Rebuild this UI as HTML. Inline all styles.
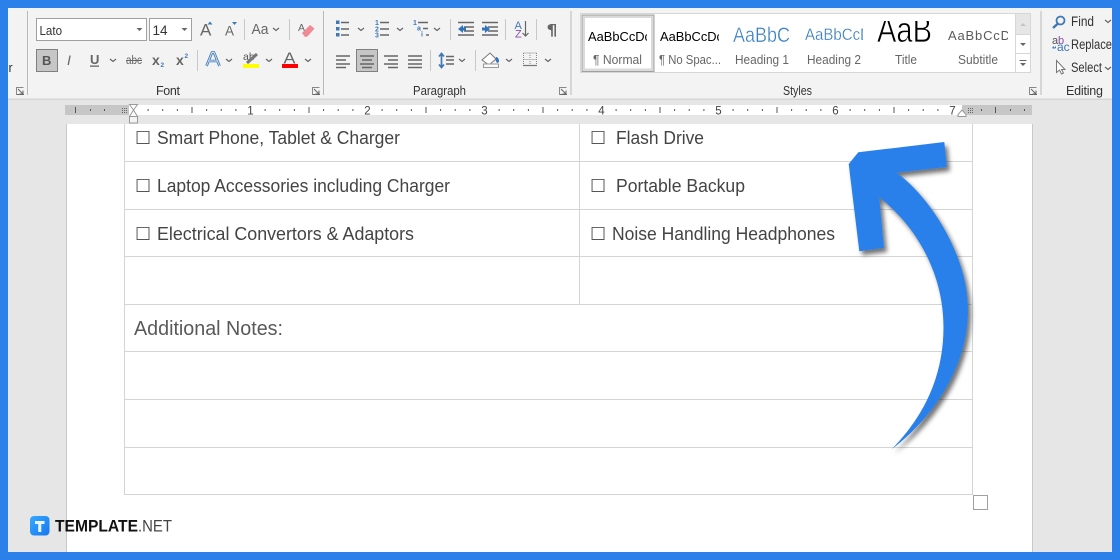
<!DOCTYPE html>
<html><head><meta charset="utf-8"><style>
html,body{margin:0;padding:0;background:#2b80ea}
svg{display:block}
text{font-family:"Liberation Sans",sans-serif}
.t{font-size:18px;fill:#444}
.r{fill:#333;font-size:12.5px}
.e{fill:#333;font-size:13.5px}
.l{fill:#666;font-size:13px}
.i{stroke:#666;stroke-width:1.5;fill:none}
</style></head><body>
<svg width="1120" height="560" viewBox="0 0 1120 560" xmlns="http://www.w3.org/2000/svg">
<defs>
<pattern id="tk" x="133" y="105" width="117" height="10" patternUnits="userSpaceOnUse">
<g fill="#555">
<rect x="14.6" y="4" width="1" height="2"/><rect x="29.2" y="4" width="1" height="2"/><rect x="43.9" y="4" width="1" height="2"/>
<rect x="58.5" y="2" width="1" height="6"/>
<rect x="73.1" y="4" width="1" height="2"/><rect x="87.7" y="4" width="1" height="2"/><rect x="102.4" y="4" width="1" height="2"/>
</g></pattern>
<pattern id="hg" width="2" height="2" patternUnits="userSpaceOnUse"><rect width="1" height="1" fill="#666"/></pattern>
<filter id="sh" x="-20%" y="-20%" width="150%" height="150%"><feDropShadow dx="3" dy="4" stdDeviation="2.500" flood-color="#000" flood-opacity=".55"/></filter>
<linearGradient id="lg" x1="0" y1="0" x2="1" y2="1"><stop offset="0" stop-color="#35aaff"/><stop offset="1" stop-color="#1677f0"/></linearGradient>
<g id="dl"><path d="M.5 7.500V.5H7.500" fill="none" stroke="#888"/><path d="M2 2L7 7M7 3.500V7H3.500M.5 7.500H8" fill="none" stroke="#666"/></g>
<path id="cv" d="M-3-1L0 1.500 3-1" fill="none" stroke="#666" stroke-width="1.200"/>
</defs>

<rect width="1120" height="560" fill="#e6e6e6"/>
<!-- ribbon -->
<rect x="0" y="8" width="1120" height="91" fill="#f3f3f3"/>
<rect x="0" y="98.500" width="1120" height="1.500" fill="#d6d6d6"/>
<g fill="#b9b9b9"><rect x="27" y="11" width="1" height="84"/><rect x="323" y="11" width="1" height="84"/><rect x="570.500" y="11" width="1" height="84"/><rect x="1040.500" y="11" width="1" height="84"/></g>
<text x="1.500" y="72" class="r">er</text>
<use href="#dl" x="16" y="87"/><use href="#dl" x="312" y="87"/><use href="#dl" x="559" y="87"/><use href="#dl" x="1029" y="87"/>
<text x="156" y="95" class="r" textLength="24">Font</text>
<text x="413" y="95" class="r" textLength="53" lengthAdjust="spacingAndGlyphs">Paragraph</text>
<text x="783" y="95" class="r" textLength="29" lengthAdjust="spacingAndGlyphs">Styles</text>
<text x="1066" y="95" class="r" textLength="37">Editing</text>

<!-- font boxes -->
<rect x="36.500" y="18.500" width="110" height="22" fill="#fff" stroke="#a0a0a0"/>
<rect x="149.500" y="18.500" width="42" height="22" fill="#fff" stroke="#a0a0a0"/>
<text x="39.500" y="35" font-size="13" fill="#333" textLength="22.500" lengthAdjust="spacingAndGlyphs">Lato</text>
<text x="152.500" y="35" font-size="13.500" fill="#333" textLength="15">14</text>
<path d="M136.500 28h6l-3 3zM181.500 28h6l-3 3z" fill="#666"/>

<!-- font row 1 -->
<text x="200" y="35.500" font-size="17" fill="#666">A</text><path d="M207.500 24.500h5l-2.500-3z" fill="#3f79b5"/>
<text x="225" y="35.500" font-size="13.500" fill="#666">A</text><path d="M232 22h5l-2.500 3z" fill="#3f79b5"/>
<rect x="244" y="19" width="1" height="21" fill="#c8c8c8"/>
<text x="251.500" y="34" font-size="15" fill="#666" textLength="17" lengthAdjust="spacingAndGlyphs">Aa</text>
<use href="#cv" x="276" y="29"/>
<rect x="289" y="19" width="1" height="21" fill="#c8c8c8"/>
<text x="298" y="31" font-size="10.500" fill="#666">A</text>
<path d="M302 33l8-8 4.500 3.500-7 8-2.500.5z" fill="#ee8b97"/>

<!-- font row 2 -->
<rect x="36.500" y="49.500" width="21" height="22" fill="#c6c6c6" stroke="#808080"/>
<text x="42" y="65" font-size="13" font-weight="bold" fill="#555">B</text>
<text x="67" y="65" font-size="14" font-style="italic" fill="#666">I</text>
<text x="90" y="64" font-size="13" font-weight="bold" fill="#666">U</text><rect x="90" y="65.500" width="9" height="1.300" fill="#666"/>
<use href="#cv" x="113" y="60"/>
<text x="126" y="64" font-size="11.500" fill="#666" textLength="16" lengthAdjust="spacingAndGlyphs">abc</text><rect x="126" y="60" width="16" height="1" fill="#666"/>
<text x="152" y="65" font-size="14" font-weight="bold" fill="#666">x</text><text x="160.500" y="67" font-size="6.500" font-weight="bold" fill="#3f79b5">2</text>
<text x="176" y="65" font-size="14" font-weight="bold" fill="#666">x</text><text x="184.500" y="58" font-size="6.500" font-weight="bold" fill="#3f79b5">2</text>
<rect x="197" y="50" width="1" height="21" fill="#c8c8c8"/>
<path d="M206.500 66l5.500-13.500h2l5.500 13.500M209 61h8" fill="none" stroke="#3f79b5" stroke-width="2.600"/>
<path d="M206.500 66l5.500-13.500h2l5.500 13.500M209 61h8" fill="none" stroke="#dbe8f6" stroke-width=".9"/>
<use href="#cv" x="229" y="60"/>
<text x="243" y="60" font-size="10.500" fill="#555">ab</text>
<path d="M247 63l10-9" stroke="#777" stroke-width="3"/>
<rect x="243" y="64" width="16" height="4" fill="#ffff00"/>
<use href="#cv" x="269" y="60"/>
<text x="283.500" y="63.500" font-size="15.500" fill="#666" textLength="12" lengthAdjust="spacingAndGlyphs">A</text>
<rect x="282" y="64" width="16" height="4" fill="#f00"/>
<use href="#cv" x="308" y="60"/>

<!-- paragraph row 1 -->
<g fill="#3f79b5"><rect x="336" y="20.500" width="3.500" height="3.500"/><rect x="336" y="27" width="3.500" height="3.500"/><rect x="336" y="33" width="3.500" height="3.500"/></g>
<path class="i" d="M341 22.500h8M341 29h8M341 35h8"/>
<use href="#cv" x="361" y="29"/>
<g fill="#3f79b5" font-size="7" font-weight="bold"><text x="375" y="25">1</text><text x="375" y="31.500">2</text><text x="375" y="37.500">3</text></g>
<path class="i" d="M380 22.500h9M380 29h9M380 35h9"/>
<use href="#cv" x="400" y="29"/>
<g fill="#3f79b5" font-size="7" font-weight="bold"><text x="413" y="25">1</text><text x="417" y="30.500">a</text><text x="421" y="36.500">i</text></g>
<path class="i" d="M418 22.500h10M423 28.500h5M426 35h3"/>
<use href="#cv" x="437" y="29"/>
<rect x="450" y="19" width="1" height="21" fill="#c8c8c8"/>
<path class="i" d="M458 22.500h16M464 27h10M464 31h10M458 35h16"/><path d="M458 29l5-4v2.500h3v3h-3v2.500z" fill="#2f74c0"/>
<path class="i" d="M482 22.500h16M488 27h10M488 31h10M482 35h16"/><path d="M490 29l-5-4v2.500h-3v3h3v2.500z" fill="#2f74c0"/>
<rect x="505" y="19" width="1" height="21" fill="#c8c8c8"/>
<text x="514.500" y="29" font-size="11" fill="#3f79b5">A</text>
<text x="515" y="37.500" font-size="11" fill="#8a4fa8">Z</text>
<path d="M525.500 21v15M522.500 33l3 3 3-3" fill="none" stroke="#666" stroke-width="1.200"/>
<rect x="536" y="19" width="1" height="21" fill="#c8c8c8"/>
<text x="546.500" y="35" font-size="15" font-weight="bold" fill="#666" style="font-family:'DejaVu Sans',sans-serif" textLength="11" lengthAdjust="spacingAndGlyphs">¶</text>

<!-- paragraph row 2 -->
<path class="i" d="M336 56h14M336 60h10M336 64h14M336 67.500h10"/>
<rect x="356.500" y="49.500" width="21" height="22" fill="#c6c6c6" stroke="#808080"/>
<path class="i" d="M360 56h14M362 60h10M360 64h14M362 67.500h10"/>
<path class="i" d="M384 56h14M388 60h10M384 64h14M388 67.500h10"/>
<path class="i" d="M408 56h14M408 60h14M408 64h14M408 67.500h14"/>
<rect x="430" y="50" width="1" height="21" fill="#c8c8c8"/>
<path d="M441.500 54v13M439 56.500l2.500-3 2.500 3M439 64.500l2.500 3 2.500-3" fill="none" stroke="#3f79b5" stroke-width="1.700"/>
<path class="i" d="M446 56.500h8M446 60h8M446 64h8"/>
<use href="#cv" x="462" y="60"/>
<rect x="475" y="50" width="1" height="21" fill="#c8c8c8"/>
<path d="M482 60l8-7 6 6-7 6z" fill="#fff" stroke="#777"/><path d="M496 57c2 0 3 2 3 5l-2 1c-1-2-2-3-1-6z" fill="#2f74c0"/>
<rect x="483.500" y="64" width="15" height="3.500" fill="#fafafa" stroke="#999"/>
<use href="#cv" x="509" y="60"/>
<path d="M523.500 53h13M523.500 59.500h13M530 53v13M523.500 53v13M536.500 53v13" fill="none" stroke="#888" stroke-dasharray="1 1"/>
<path d="M523 65.500h14" stroke="#777" stroke-width="1.200"/>
<use href="#cv" x="548" y="60"/>

<!-- styles gallery -->
<rect x="580.500" y="13.500" width="450" height="59" fill="#fff" stroke="#d6d6d6"/>
<rect x="583.500" y="16.500" width="69" height="53.500" fill="#fff" stroke="#dadada" stroke-width="3"/>
<rect x="582" y="15" width="72" height="56.500" fill="none" stroke="#a0a0a0"/>
<svg x="588" y="20" width="59" height="30"><text x="0" y="21" font-size="13" fill="#000" textLength="63" lengthAdjust="spacingAndGlyphs">AaBbCcDc</text></svg>
<svg x="660" y="20" width="59" height="30"><text x="0" y="21" font-size="13" fill="#000" textLength="63" lengthAdjust="spacingAndGlyphs">AaBbCcDc</text></svg>
<svg x="733" y="20" width="58" height="30"><text x="0" y="22" font-size="21" fill="#3b80c0" stroke="#fff" stroke-width=".35" textLength="66" lengthAdjust="spacingAndGlyphs">AaBbCc</text></svg>
<svg x="805" y="20" width="58" height="30"><text x="0" y="20" font-size="16.500" fill="#3b80c0" stroke="#fff" stroke-width=".25" textLength="66" lengthAdjust="spacingAndGlyphs">AaBbCcD</text></svg>
<svg x="877" y="21" width="56" height="30"><text x="0" y="21" font-size="36" fill="#000" stroke="#fff" stroke-width=".7" textLength="55" lengthAdjust="spacingAndGlyphs">AaB</text></svg>
<svg x="948" y="20" width="60" height="30"><text x="0" y="20" font-size="13" fill="#5a5a5a" textLength="62">AaBbCcD</text></svg>
<text x="593" y="64" class="l" textLength="49" lengthAdjust="spacingAndGlyphs">¶ Normal</text>
<text x="659" y="64" class="l" textLength="62" lengthAdjust="spacingAndGlyphs">¶ No Spac...</text>
<text x="735" y="64" class="l" textLength="54" lengthAdjust="spacingAndGlyphs">Heading 1</text>
<text x="807" y="64" class="l" textLength="54" lengthAdjust="spacingAndGlyphs">Heading 2</text>
<text x="895" y="64" class="l" textLength="22" lengthAdjust="spacingAndGlyphs">Title</text>
<text x="958" y="64" class="l" textLength="40" lengthAdjust="spacingAndGlyphs">Subtitle</text>
<rect x="1015.500" y="13.500" width="15" height="21" fill="#e6e6e6" stroke="#d6d6d6"/>
<rect x="1015.500" y="34.500" width="15" height="19" fill="#fff" stroke="#d6d6d6"/>
<rect x="1015.500" y="53.500" width="15" height="19" fill="#fff" stroke="#d6d6d6"/>
<path d="M1020 26l3-3 3 3z" fill="#c4c4c4"/><path d="M1020 43l3 3 3-3z" fill="#666"/><path d="M1019.500 60.500h7" stroke="#666"/><path d="M1020 63l3 3 3-3z" fill="#666"/>

<!-- editing -->
<circle cx="1060.500" cy="20.500" r="4" fill="none" stroke="#3f79b5" stroke-width="1.800"/><path d="M1058 23.500l-5 4.500" stroke="#3f79b5" stroke-width="2.400"/>
<text x="1071" y="26" class="e" textLength="23" lengthAdjust="spacingAndGlyphs">Find</text>
<use href="#cv" x="1108" y="21"/>
<text x="1052" y="44" font-size="11" fill="#555">a</text><text x="1058" y="44" font-size="11" fill="#8a4fa8">b</text>
<text x="1057" y="51" font-size="12" fill="#3f79b5">ac</text><path d="M1052.500 48h3M1052.500 48l1.500-1.500M1055.500 48v-1.500" stroke="#3f79b5" fill="none"/>
<text x="1071" y="49" class="e" textLength="41" lengthAdjust="spacingAndGlyphs">Replace</text>
<path d="M1056.500 60.500v12l3-2.500 2 4 2-1-2-3.500h3.500z" fill="#fff" stroke="#777"/>
<text x="1071" y="72" class="e" textLength="31" lengthAdjust="spacingAndGlyphs">Select</text>
<use href="#cv" x="1108" y="68"/>

<!-- ruler -->
<rect x="65" y="105" width="64" height="10" fill="#c6c6c6"/>
<rect x="129" y="105" width="833" height="10" fill="#fff"/>
<rect x="962" y="105" width="70" height="10" fill="#c6c6c6"/>
<rect x="129" y="105" width="833" height="10" fill="url(#tk)"/>
<g fill="#555"><rect x="75" y="107" width="1" height="6"/><rect x="90" y="109" width="1" height="2"/><rect x="104" y="109" width="1" height="2"/><rect x="981" y="109" width="1" height="2"/><rect x="995" y="107" width="1" height="6"/><rect x="1010" y="109" width="1" height="2"/><rect x="1024" y="109" width="1" height="2"/></g>
<rect x="121" y="107" width="6" height="6" fill="url(#hg)"/><rect x="967" y="107" width="7" height="6" fill="url(#hg)"/>
<g font-size="11.500" fill="#444" text-anchor="middle"><text x="250.500" y="114.500">1</text><text x="367.500" y="114.500">2</text><text x="484.500" y="114.500">3</text><text x="601.500" y="114.500">4</text><text x="718.500" y="114.500">5</text><text x="835.500" y="114.500">6</text><text x="952.500" y="114.500">7</text></g>
<path d="M129.500 104.500h8l-4 5.500 4 6.500h-8l4-6.500z" fill="#fff" stroke="#999"/>
<rect x="129.500" y="116.500" width="8" height="6.500" fill="#f3f3f3" stroke="#999"/>
<path d="M958 116.500v-2l4-4.500 4 4.500v2z" fill="#fff" stroke="#999"/>

<!-- page -->
<rect x="67" y="124" width="965" height="428" fill="#fff"/>
<rect x="66" y="124" width="1" height="428" fill="#c8c8c8"/>
<rect x="1032" y="124" width="1" height="428" fill="#c8c8c8"/>
<g stroke="#d4d4d4" fill="none">
<path d="M124.500 124V494.500H972.500V124M579.500 124V304.500M124 161.500H973M124 209.500H973M124 256.500H973M124 304.500H973M124 351.500H973M124 399.500H973M124 447.500H973"/>
</g>
<rect x="973.500" y="495.500" width="14" height="14" fill="#fff" stroke="#a0a0a0"/>

<!-- table text -->
<g font-size="18" fill="#555">
<text x="135" y="144" style="font-family:'DejaVu Sans',sans-serif">☐</text><text x="135" y="192" style="font-family:'DejaVu Sans',sans-serif">☐</text><text x="135" y="240" style="font-family:'DejaVu Sans',sans-serif">☐</text>
<text x="590" y="144" style="font-family:'DejaVu Sans',sans-serif">☐</text><text x="590" y="192" style="font-family:'DejaVu Sans',sans-serif">☐</text><text x="590" y="240" style="font-family:'DejaVu Sans',sans-serif">☐</text>
</g>
<text x="157" y="144" class="t" textLength="243" lengthAdjust="spacingAndGlyphs">Smart Phone, Tablet &amp; Charger</text>
<text x="157" y="192" class="t" textLength="293" lengthAdjust="spacingAndGlyphs">Laptop Accessories including Charger</text>
<text x="157" y="240" class="t" textLength="257" lengthAdjust="spacingAndGlyphs">Electrical Convertors &amp; Adaptors</text>
<text x="616" y="144" class="t" textLength="88" lengthAdjust="spacingAndGlyphs">Flash Drive</text>
<text x="616" y="192" class="t" textLength="129" lengthAdjust="spacingAndGlyphs">Portable Backup</text>
<text x="612" y="240" class="t" textLength="223" lengthAdjust="spacingAndGlyphs">Noise Handling Headphones</text>
<text x="134" y="335" font-size="20" fill="#595959" textLength="149" lengthAdjust="spacingAndGlyphs">Additional Notes:</text>

<!-- arrow -->
<path filter="url(#sh)" fill="#2b80ea" d="M858.300 152.300L944.300 142L947 167L896.700 172.700C930 197 968 255 968 310C968 370 930 420 891.700 449.300C925 415 943.500 375 943.500 327C943.500 275 918 228 879.300 197.300L884 248L859.300 251.300L848.700 164Z"/>

<!-- logo -->
<rect x="30" y="516" width="19.500" height="19.500" rx="4" fill="url(#lg)"/>
<path d="M35 521h9.500v3h-3.200v8h-3.100v-8H35z" fill="#e8f3ff"/>
<text x="55" y="531.500" font-size="17" font-weight="bold" fill="#111" textLength="83" lengthAdjust="spacingAndGlyphs">TEMPLATE</text>
<text x="138" y="531.500" font-size="17" fill="#444" textLength="34" lengthAdjust="spacingAndGlyphs">.NET</text>

<!-- blue frame -->
<path fill="#2b80ea" fill-rule="evenodd" d="M0 0H1120V560H0ZM8 8V552H1112V8Z"/>
</svg>
</body></html>
